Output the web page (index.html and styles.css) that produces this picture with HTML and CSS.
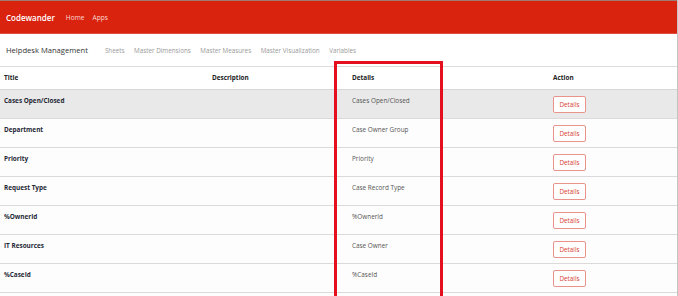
FILE: index.html
```html
<!DOCTYPE html>
<html>
<head>
<meta charset="utf-8">
<link rel="stylesheet" href="styles.css">
</head>
<body>
<div class="page">
  <header class="topbar">
    <span class="brand">Codewander</span>
    <nav class="topnav">
      <a>Home</a>
      <a>Apps</a>
    </nav>
  </header>
  <div class="subbar">
    <span class="apptitle">Helpdesk Management</span>
    <nav class="subnav">
      <a>Sheets</a>
      <a>Master Dimensions</a>
      <a>Master Measures</a>
      <a>Master Visualization</a>
      <a>Variables</a>
    </nav>
  </div>
  <div class="tablewrap">
    <table class="grid">
      <colgroup>
        <col class="c1"><col class="c2"><col class="c3"><col class="c4">
      </colgroup>
      <thead>
        <tr><th>Title</th><th>Description</th><th>Details</th><th>Action</th></tr>
      </thead>
      <tbody>
        <tr class="hover"><td class="t">Cases Open/Closed</td><td></td><td class="d">Cases Open/Closed</td><td><button class="btn">Details</button></td></tr>
        <tr><td class="t">Department</td><td></td><td class="d">Case Owner Group</td><td><button class="btn">Details</button></td></tr>
        <tr><td class="t">Priority</td><td></td><td class="d">Priority</td><td><button class="btn">Details</button></td></tr>
        <tr><td class="t">Request Type</td><td></td><td class="d">Case Record Type</td><td><button class="btn">Details</button></td></tr>
        <tr><td class="t">%OwnerId</td><td></td><td class="d">%OwnerId</td><td><button class="btn">Details</button></td></tr>
        <tr><td class="t">IT Resources</td><td></td><td class="d">Case Owner</td><td><button class="btn">Details</button></td></tr>
        <tr><td class="t">%CaseId</td><td></td><td class="d">%CaseId</td><td><button class="btn">Details</button></td></tr>
        <tr><td class="t">&nbsp;</td><td></td><td class="d"></td><td></td></tr>
      </tbody>
    </table>
    <div class="highlight"></div>
  </div>
</div>
</body>
</html>
```
FILE: styles.css
```css
* { box-sizing: border-box; }
html, body { margin: 0; padding: 0; }
body {
  font-family: "Open Sans", "Liberation Sans", sans-serif;
  background: #fff;
  overflow: hidden;
  height: 296px;
}
.page {
  width: 678px;
  height: 296px;
  border-right: 1px solid #c4c4c4;
  overflow: hidden;
}
.topbar {
  height: 34px;
  background: #d9230f;
  border-top: 1px solid #9e7a70;
  border-bottom: 1px solid #e0503e;
  display: flex;
  align-items: center;
  padding: 0 0 0 6px;
}
.brand {
  color: #fff;
  font-size: 8px;
  font-weight: 600;
  margin-right: 11px;
}
.topnav { display: flex; gap: 8px; }
.topnav a {
  color: #fbd9d4;
  font-size: 6.6px;
}
.subbar {
  height: 33px;
  border-bottom: 1px solid #dcdcdc;
  display: flex;
  align-items: center;
  padding-left: 6px;
}
.apptitle {
  color: #333;
  font-size: 7.6px;
  margin-right: 17px;
}
.subnav { display: flex; gap: 9.5px; }
.subnav a {
  color: #9a9a9a;
  font-size: 6.3px;
}
.tablewrap {
  position: relative;
}
.grid {
  width: 678px;
  border-collapse: collapse;
  table-layout: fixed;
}
.c1 { width: 208px; }
.c2 { width: 140px; }
.c3 { width: 201px; }
.c4 { width: 129px; }
.grid th {
  text-align: left;
  font-weight: 700;
  font-size: 6.4px;
  color: #222;
  height: 22px;
  padding: 0 4px;
  border-bottom: 1px solid #d6d6d6;
}
.grid td {
  vertical-align: top;
  padding: 6px 4px 5px;
  height: 29px;
  font-size: 6.4px;
  line-height: 10px;
  border-bottom: 1px solid #dadada;
  background: #fdfdfd;
}
.grid tr.hover td { background: #e9e9e9; }
.grid td.t { font-weight: 700; color: #1f2836; }
.grid td.d { color: #555; }
.btn {
  display: block;
  width: 33px;
  height: 17px;
  padding: 0;
  border: 1px solid #e9938a;
  border-radius: 2px;
  background: #fff;
  color: #d9402f;
  font-family: "Open Sans", "Liberation Sans", sans-serif;
  font-size: 6.3px;
}
.highlight {
  position: absolute;
  left: 334px;
  top: -6px;
  width: 109px;
  height: 260px;
  border: 3px solid #e5101e;
  border-bottom: none;
}
```
